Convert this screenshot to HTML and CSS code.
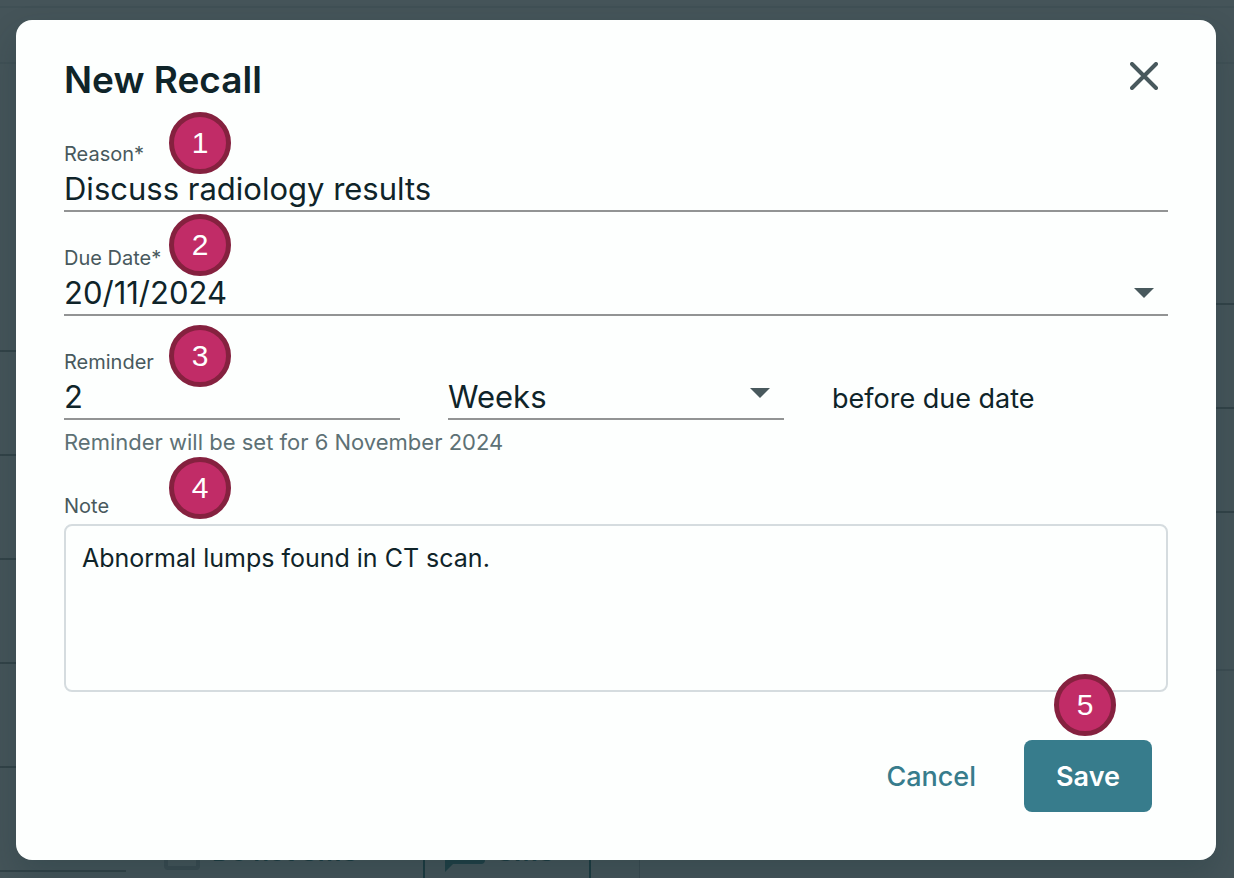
FILE: index.html
```html
<!DOCTYPE html>
<html lang="en">

    <head>
        <meta charset="utf-8">
        <meta name="viewport" content="width=device-width, initial-scale=1">
        <title>New Recall</title>
        <link rel="stylesheet" href="styles.css">
    </head>

    <body>
        <!-- dimmed page behind the dialog -->
        <div class="page" aria-hidden="true">
            <div class="page-bar"></div>
            <div class="page-tabs"></div>
            <div class="page-columns">
                <div class="page-list">
                    <div></div>
                    <div></div>
                    <div></div>
                    <div></div>
                    <div></div>
                    <div></div>
                </div>
                <div class="page-actions">
                    <span class="page-check"></span>
                    <span class="page-check-text">Do not SMS</span>
                    <span class="page-sms">
                        <svg width="40" height="40" viewBox="0 0 40 40"><path d="M4 0h32q4 0 4 4v20q0 4-4 4H8L0 36V4q0-4 4-4z" /></svg>
                        SMS
                    </span>
                </div>
                <div class="page-side">
                    <div></div>
                    <div></div>
                    <div></div>
                    <div></div>
                    <div></div>
                </div>
            </div>
        </div>

        <form class="dialog" role="dialog" aria-labelledby="dialog-title">
            <header class="dialog-header">
                <h1 id="dialog-title">New Recall</h1>
                <button class="close" type="button" aria-label="Close">
                    <svg width="28" height="28" viewBox="0 0 28 28"><path d="M2 2l24 24M26 2L2 26" /></svg>
                </button>
            </header>

            <div class="fields">
                <div class="field">
                    <label for="reason">Reason*</label>
                    <div class="control">
                        <input id="reason" type="text" value="Discuss radiology results">
                    </div>
                    <span class="badge badge-reason">1</span>
                </div>

                <div class="field">
                    <label for="due">Due Date*</label>
                    <div class="control">
                        <input id="due" type="text" value="20/11/2024">
                        <button class="picker" type="button" aria-label="Choose date">
                            <svg class="arrow" width="20" height="10" viewBox="0 0 20 10"><path d="M0 0h20L10 10z" /></svg>
                        </button>
                    </div>
                    <span class="badge badge-due">2</span>
                </div>

                <div class="field">
                    <div class="reminder">
                        <div>
                            <label for="reminder">Reminder</label>
                            <div class="control">
                                <input id="reminder" type="text" inputmode="numeric" value="2">
                            </div>
                        </div>
                        <div class="control select">
                            <select aria-label="Reminder unit">
                                <option>Days</option>
                                <option selected>Weeks</option>
                                <option>Months</option>
                            </select>
                            <svg class="arrow" width="20" height="10" viewBox="0 0 20 10"><path d="M0 0h20L10 10z" /></svg>
                        </div>
                        <span class="suffix">before due date</span>
                    </div>
                    <p class="hint">Reminder will be set for 6 November 2024</p>
                    <span class="badge badge-reminder">3</span>
                </div>

                <div class="field">
                    <label for="note">Note</label>
                    <textarea id="note">Abnormal lumps found in CT scan.</textarea>
                    <span class="badge badge-note">4</span>
                </div>
            </div>

            <footer class="dialog-footer">
                <button class="btn" type="button">Cancel</button>
                <div class="save">
                    <button class="btn btn-primary" type="submit">Save</button>
                    <span class="badge badge-save">5</span>
                </div>
            </footer>
        </form>
    </body>

</html>
```

FILE: styles.css
```css
:root {
    --ink: #0f2429;
    --muted: #48595d;
    --hint: #5d7175;
    --teal: #377c8c;
    --line: #929494;
    --surface: #fdfffe;
    --page: #455459;
    --page-line: #324247;
}

* {
    box-sizing: border-box;
}

body {
    display: grid;
    height: 100vh;
    margin: 0;
    overflow: hidden;
    background: var(--page);
    color: var(--ink);
    font-family: Inter, "Liberation Sans", sans-serif;
}

.page,
.dialog {
    grid-area: 1 / 1;
    min-width: 0;
}

/* page behind */

.page {
    display: flex;
    flex-direction: column;
    height: 100vh;
    overflow: hidden;
}

.page-bar {
    flex: none;
    height: 8px;
    border-bottom: 2px solid #405055;
}

.page-tabs {
    flex: none;
    height: 56px;
    border-bottom: 2px solid #405055;
}

.page-columns {
    display: flex;
    flex: 1;
    min-height: 0;
}

.page-list {
    width: 126px;

    &>div {
        height: 104px;
        border-bottom: 2px solid var(--page-line);
    }

    &>div:first-child {
        height: 288px;
    }
}

.page-actions {
    display: flex;
    align-self: flex-end;
    align-items: flex-end;
    width: 513px;
    height: 32px;
    padding-left: 38px;
    color: #1b393f;
    font-size: 26px;
    font-weight: 600;
    line-height: 42px;
}

.page-check {
    width: 36px;
    height: 36px;
    margin: 0 12px 8px 0;
    border: 4px solid #3a4a50;
    border-radius: 4px;
}

.page-check-text {
    flex: 1;
    margin-bottom: 5px;
}

.page-sms {
    display: flex;
    gap: 12px;
    width: 168px;
    height: 44px;
    margin-right: 48px;
    padding: 2px 0 0 20px;
    border: solid #1b393f;
    border-width: 0 2px;
    line-height: 32px;

    & svg {
        fill: #1f3f45;
    }
}

.page-side {
    flex: 1;
    border-left: 1px solid #3b4a50;

    &>div {
        height: 104px;
        border-bottom: 2px solid var(--page-line);
    }

    &>div:first-child {
        height: 241px;
    }

    &>div:nth-child(4) {
        height: 158px;
        border-color: #3d4c52;
    }

    &>div:last-child {
        height: 208px;
        border: 0;
    }
}

/* dialog */

.dialog {
    align-self: start;
    margin: 20px 18px 18px 16px;
    padding: 32px 48px 48px;
    border-radius: 16px;
    background: var(--surface);
    box-shadow: 0 16px 32px rgb(20 50 55 / 24%);
}

.dialog-header {
    display: flex;
    align-items: flex-start;
    justify-content: space-between;
    margin-bottom: 32px;

    & h1 {
        margin: 0;
        font-size: 37px;
        font-weight: 600;
        line-height: 56px;
    }
}

button {
    padding: 0;
    border: 0;
    background: none;
    font: inherit;
    cursor: pointer;
}

.close {
    display: grid;
    place-items: center;
    width: 48px;
    height: 48px;

    & svg {
        fill: none;
        stroke: var(--muted);
        stroke-width: 4;
        stroke-linecap: round;
    }
}

.fields {
    display: grid;
    gap: 32px;
}

.field {
    position: relative;
}

label {
    display: block;
    color: var(--muted);
    font-size: 20px;
    line-height: 28px;
}

.control {
    display: flex;
    align-items: center;
    height: 44px;
    border-bottom: 2px solid var(--line);
}

input,
select,
textarea {
    width: 100%;
    min-width: 0;
    padding: 0;
    border: 0;
    background: none;
    color: var(--ink);
    font: inherit;
}

input,
select {
    height: 42px;
    padding-bottom: 2px;
    font-size: 31px;
}

.arrow {
    fill: var(--muted);
}

.picker {
    display: grid;
    flex: none;
    place-items: center;
    width: 48px;
    height: 42px;
}

.reminder {
    display: grid;
    grid-template-columns: repeat(3, 1fr);
    align-items: end;
    gap: 48px;
}

.select {
    display: grid;

    & select {
        grid-area: 1 / 1;
        appearance: none;
    }

    & .arrow {
        grid-area: 1 / 1;
        justify-self: end;
        margin: 0 14px 8px 0;
        pointer-events: none;
    }
}

.suffix {
    font-size: 27px;
    line-height: 42px;
}

.hint {
    margin: 4px 0 0;
    color: var(--hint);
    font-size: 22px;
    line-height: 36px;
}

textarea {
    display: block;
    height: 168px;
    margin-top: 4px;
    padding: 16px;
    border: 2px solid #d5dcdf;
    border-radius: 8px;
    font-size: 25px;
    line-height: 32px;
    resize: none;
}

.dialog-footer {
    display: flex;
    justify-content: flex-end;
    gap: 16px;
    margin-top: 48px;
    padding-right: 16px;
}

.btn {
    height: 72px;
    padding: 0 32px;
    border-radius: 8px;
    color: var(--teal);
    font-size: 27px;
    font-weight: 500;
}

.btn-primary {
    width: 128px;
    background: var(--teal);
    color: #fff;
    font-weight: 600;
}

.save {
    position: relative;
}

/* numbered callouts, laid over the form */

.badge {
    position: absolute;
    left: 105px;
    width: 62px;
    height: 62px;
    border: 5px solid #85213f;
    border-radius: 50%;
    background: #c12c67;
    color: #fff;
    font-family: "Liberation Sans", Arial, sans-serif;
    font-size: 30px;
    line-height: 52px;
    text-align: center;
}

.badge-reason {
    top: -28px;
}

.badge-due {
    top: -30px;
}

.badge-reminder {
    top: -23px;
}

.badge-note {
    top: -35px;
}

.badge-save {
    top: -66px;
    left: 30px;
}
```
